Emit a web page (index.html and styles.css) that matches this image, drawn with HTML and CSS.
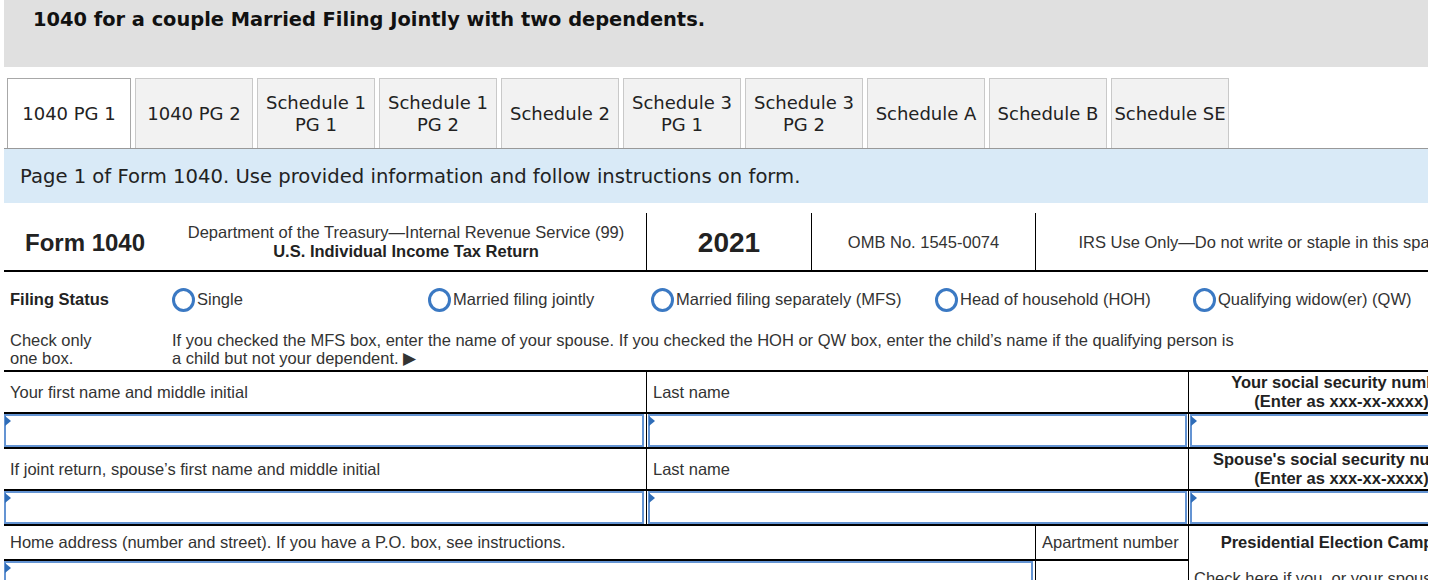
FILE: index.html
```html
<!DOCTYPE html>
<html>
<head>
<meta charset="utf-8">
<title>1040</title>
<link rel="stylesheet" href="styles.css">
</head>
<body>
<div class="page">
  <header class="banner">
    <h1>1040 for a couple Married Filing Jointly with two dependents.</h1>
  </header>

  <nav class="tabs">
    <div class="tab active">1040 PG 1</div>
    <div class="tab">1040 PG 2</div>
    <div class="tab">Schedule 1<br>PG 1</div>
    <div class="tab">Schedule 1<br>PG 2</div>
    <div class="tab">Schedule 2</div>
    <div class="tab">Schedule 3<br>PG 1</div>
    <div class="tab">Schedule 3<br>PG 2</div>
    <div class="tab">Schedule A</div>
    <div class="tab">Schedule B</div>
    <div class="tab">Schedule SE</div>
  </nav>

  <div class="panel">Page 1 of Form 1040. Use provided information and follow instructions on form.</div>

  <div class="form">
    <div class="form-head">
      <div class="fh fh-form">Form 1040</div>
      <div class="fh fh-dept">
        <div>Department of the Treasury—Internal Revenue Service (99)</div>
        <div class="bold">U.S. Individual Income Tax Return</div>
      </div>
      <div class="fh fh-year sep">2021</div>
      <div class="fh fh-omb sep">OMB No. 1545-0074</div>
      <div class="fh fh-irs sep">IRS Use Only—Do not write or staple in this space.</div>
    </div>

    <div class="filing">
      <div class="fs-title">Filing Status</div>
      <div class="fs-options">
        <label class="radio r1"><span class="ring"></span>Single</label>
        <label class="radio r2"><span class="ring"></span>Married filing jointly</label>
        <label class="radio r3"><span class="ring"></span>Married filing separately (MFS)</label>
        <label class="radio r4"><span class="ring"></span>Head of household (HOH)</label>
        <label class="radio r5"><span class="ring"></span>Qualifying widow(er) (QW)</label>
      </div>
      <div class="fs-note">Check only<br>one box.</div>
      <div class="fs-text">If you checked the MFS box, enter the name of your spouse. If you checked the HOH or QW box, enter the child’s name if the qualifying person is a child but not your dependent. ▶</div>
    </div>

    <div class="names">
      <div class="cell lbl">Your first name and middle initial</div>
      <div class="cell lbl sep">Last name</div>
      <div class="cell lbl ssn sep"><div>Your social security number</div><div>(Enter as xxx-xx-xxxx)</div></div>

      <div class="cell inp first"><div class="box"></div></div>
      <div class="cell inp sep"><div class="box"></div></div>
      <div class="cell inp sep"><div class="box"></div></div>

      <div class="cell lbl">If joint return, spouse’s first name and middle initial</div>
      <div class="cell lbl sep">Last name</div>
      <div class="cell lbl ssn sep"><div>Spouse's social security number</div><div>(Enter as xxx-xx-xxxx)</div></div>

      <div class="cell inp first"><div class="box"></div></div>
      <div class="cell inp sep"><div class="box"></div></div>
      <div class="cell inp sep"><div class="box"></div></div>
    </div>

    <div class="address">
      <div class="cell lbl3">Home address (number and street). If you have a P.O. box, see instructions.</div>
      <div class="cell lbl3 sep">Apartment number</div>
      <div class="cell pec sep">
        <div class="pec-title">Presidential Election Campaign</div>
        <div class="pec-text">Check here if you, or your spouse if filing jointly, want $3 to go to this fund. Checking a box below will not change your tax or refund.</div>
      </div>
      <div class="cell inp3 first"><div class="box"></div></div>
      <div class="cell inp3 sep"></div>
    </div>
  </div>
</div>
</body>
</html>
```
FILE: styles.css
```css
html, body {
  margin: 0;
  padding: 0;
  background: #fff;
  overflow: hidden;
}

.page {
  width: 1424px;
  height: 580px;
  margin-left: 4px;
  overflow: hidden;
  font-family: "DejaVu Sans", Verdana, sans-serif;
  color: #222;
}

/* banner */
.banner {
  height: 67px;
  background: #e0e0e0;
}
.banner h1 {
  margin: 0;
  padding: 8px 0 0 29px;
  font-size: 19.4px;
  line-height: 24px;
  font-weight: bold;
  color: #111;
}

/* tabs */
.tabs {
  display: flex;
  gap: 4px;
  margin-top: 11px;
  padding-left: 3px;
}
.tab {
  box-sizing: border-box;
  width: 118px;
  height: 70px;
  border: 1px solid #c9c9c9;
  border-bottom: none;
  background: #f2f2f2;
  display: flex;
  align-items: center;
  justify-content: center;
  text-align: center;
  white-space: nowrap;
  font-size: 18px;
  line-height: 22px;
  color: #222;
}
.tab.active {
  width: 124px;
  background: #fff;
  border-color: #a8a8a8;
}

/* instruction panel */
.panel {
  border-top: 1px solid #999;
  background: #d9eaf7;
  height: 54px;
  overflow: hidden;
  padding-left: 16px;
  font-size: 19.6px;
  line-height: 56px;
  color: #222;
}

/* form */
.form {
  margin-top: 10px;
  width: 1490px;
  font-family: "Liberation Sans", Arial, sans-serif;
  font-size: 16.5px;
  color: #333;
}
.sep {
  border-left: 1px solid #000;
}
.bold {
  font-weight: bold;
  color: #222;
}

.form-head {
  box-sizing: border-box;
  display: grid;
  grid-template-columns: 162px 480px 165px 224px 1fr;
  height: 59px;
  border-bottom: 2px solid #000;
}
.fh {
  display: flex;
  flex-direction: column;
  align-items: center;
  justify-content: center;
  text-align: center;
}
.fh-form {
  font-size: 24px;
  font-weight: bold;
  color: #222;
  padding-top: 2px;
}
.fh-dept {
  line-height: 19px;
}
.fh-year {
  font-size: 28px;
  font-weight: bold;
  color: #222;
  padding-top: 2px;
}
.fh-omb,
.fh-irs {
  padding-top: 2px;
}

/* filing status */
.filing {
  display: grid;
  grid-template-columns: 162px 1fr;
  grid-template-rows: 55px auto;
  border-bottom: 2px solid #000;
}
.fs-title {
  padding-left: 6px;
  display: flex;
  align-items: center;
  font-weight: bold;
  color: #222;
}
.fs-options {
  display: flex;
  align-items: center;
  padding-left: 6px;
}
.radio {
  display: flex;
  align-items: center;
  color: #333;
}
.r1 { width: 256px; }
.r2 { width: 223px; }
.r3 { width: 284px; }
.r4 { width: 258px; }
.ring {
  box-sizing: border-box;
  width: 23px;
  height: 24px;
  border: 3px solid #3b79c3;
  border-radius: 50%;
  background: #fff;
  margin-right: 2px;
}
.fs-note,
.fs-text {
  padding: 4px 0 3px 6px;
  line-height: 18px;
}
.fs-text {
  max-width: 1068px;
}

/* names */
.names {
  display: grid;
  grid-template-columns: 642px 542px 1fr;
  grid-template-rows: 42px 35px 42px 35px;
}
.cell {
  box-sizing: border-box;
  border-bottom: 2px solid #000;
}
.lbl {
  display: flex;
  align-items: center;
  padding-left: 6px;
}
.ssn {
  flex-direction: column;
  justify-content: center;
  padding-left: 0;
  font-weight: bold;
  color: #222;
  line-height: 19px;
  text-align: center;
}
.inp {
  padding: 0 1px;
}
.inp.first {
  padding: 0 2px 0 0;
}
.box {
  position: relative;
  box-sizing: border-box;
  height: 100%;
  border: 2px solid #6494d3;
  background: #fff;
}
.box::before {
  content: "";
  position: absolute;
  left: -1px;
  top: 0;
  border-left: 6px solid #2f6db8;
  border-top: 5px solid transparent;
  border-bottom: 5px solid transparent;
}

/* address */
.address {
  display: grid;
  grid-template-columns: 1031px 153px 1fr;
  grid-template-rows: 35px 40px;
}
.lbl3 {
  display: flex;
  align-items: center;
  padding-left: 6px;
}
.pec {
  grid-column: 3;
  grid-row: 1 / span 2;
  border-bottom: none;
  padding: 7px 0 0 5px;
}
.pec-title {
  text-align: center;
  font-weight: bold;
  color: #222;
  line-height: 19px;
}
.pec-text {
  margin-top: 17px;
  line-height: 19px;
  color: #333;
}
.inp3 {
  border-bottom: none;
}
.inp3.first {
  padding-right: 2px;
}
```
